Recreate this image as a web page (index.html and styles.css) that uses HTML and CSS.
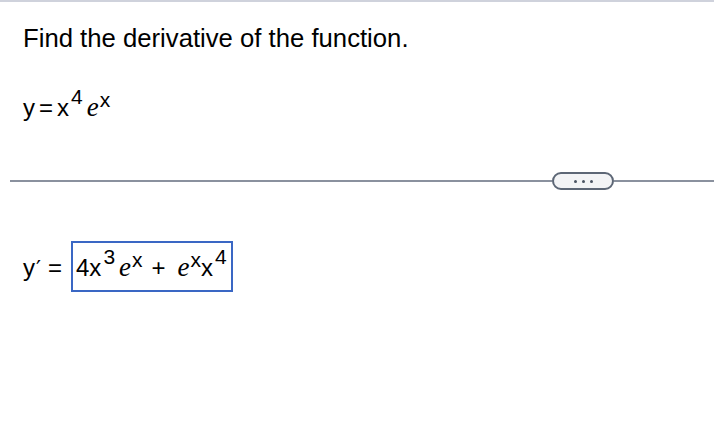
FILE: index.html
```html
<!DOCTYPE html>
<html lang="en">
<head>
    <meta charset="UTF-8">
    <title>Find the derivative</title>
    <link rel="stylesheet" href="styles.css">
</head>
<body>
    <div class="question">
        <p class="prompt">Find the derivative of the function.</p>
        <div class="math given">
            <span>y</span><span class="op">=</span><span>x</span><sup>4</sup><span class="e">e</span><sup class="ex">x</sup>
        </div>
    </div>
    <div class="divider">
        <span class="line"></span>
        <button class="more" type="button" aria-label="More"><i></i><i></i><i></i></button>
        <span class="line short"></span>
    </div>
    <div class="answer math">
        <span>y<span class="prime">&prime;</span></span><span class="op wide">=</span>
        <span class="box">4x<sup>3</sup><span class="e">e</span><sup class="ex">x</sup><span class="op plus">+</span><span class="e">e</span><sup class="ex">x</sup>x<sup>4</sup></span>
    </div>
</body>
</html>
```

FILE: styles.css
```css
body { margin: 0; font-family: "Liberation Sans", Arial, sans-serif; color: #000; background: #fff; border-top: 2px solid #cfd2dc; }
.question { padding: 0 23px; }
.prompt { font-size: 25.7px; margin: 22px 0 0; line-height: 28px; }
.math { font-size: 24px; line-height: 28px; }
.math sup { font-size: 21px; vertical-align: 12px; line-height: 0; margin-left: 2px; }
.math .e { font-family: "Liberation Serif", "Times New Roman", serif; font-style: italic; font-size: 27px; margin-left: 4px; }
.math sup.ex { font-size: 21px; vertical-align: 9px; margin-left: 1px; }
.prime { font-family: "DejaVu Sans", sans-serif; font-size: 22px; line-height: 0; margin-left: 1px; }
.op { margin: 0 4px; }
.op.wide { margin: 0 9px 0 7px; }
.op.plus { margin: 0 8px 0 9px; }
.given { margin-top: 41px; }
.divider { display: flex; align-items: center; margin: 50px 0 0 10px; }
.line { flex: 1; height: 2px; background: #8a919e; }
.line.short { flex: 0 0 100px; }
.more { display: flex; align-items: center; justify-content: center; gap: 5px; width: 62px; height: 18px; border: 2px solid #5d6776; border-radius: 9px; background: #f3f4f6; padding: 0; }
.more i { width: 3px; height: 3px; border-radius: 50%; background: #4b5563; }
.answer { display: flex; align-items: baseline; margin: 51px 0 0 23px; }
.box { border: 2px solid #3a67c4; padding: 9px 4px 7px 3px; line-height: 30px; }
```
